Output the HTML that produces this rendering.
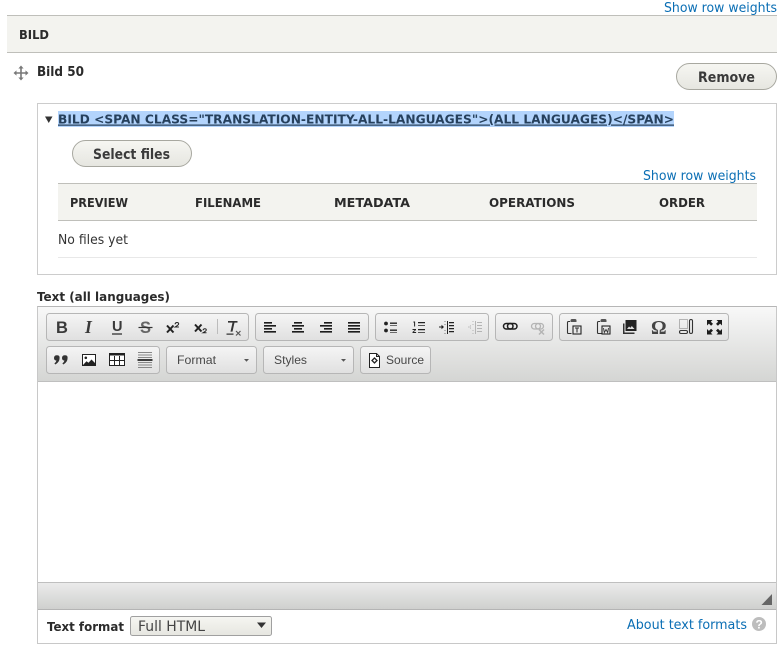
<!DOCTYPE html>
<html><head><meta charset="utf-8"><title>Bild</title>
<style>
html,body{margin:0;padding:0;background:#fff;width:784px;height:653px;overflow:hidden}
svg{display:block}
text{font-family:"DejaVu Sans","Liberation Sans",sans-serif;font-size:13px;fill:#333;white-space:pre}
.b{font-weight:bold;fill:#2b2b2b;font-size:12.5px}
.l{fill:#0a6eb4}
.a{font-family:"Liberation Sans",sans-serif;fill:#484848;font-size:12px}
</style></head><body>
<svg width="784" height="653" viewBox="0 0 784 653" xmlns="http://www.w3.org/2000/svg">
<defs>
<linearGradient id="btn" x1="0" y1="0" x2="0" y2="1"><stop offset="0" stop-color="#f6f6f2"/><stop offset="1" stop-color="#e6e6e0"/></linearGradient>
<linearGradient id="tb" x1="0" y1="0" x2="0" y2="1"><stop offset="0" stop-color="#f8f8f8"/><stop offset="1" stop-color="#d4d5d3"/></linearGradient>
<linearGradient id="bot" x1="0" y1="0" x2="0" y2="1"><stop offset="0" stop-color="#ebebeb"/><stop offset="1" stop-color="#cfd0ce"/></linearGradient>
<linearGradient id="grp" x1="0" y1="0" x2="0" y2="1"><stop offset="0" stop-color="#f5f5f5"/><stop offset="1" stop-color="#e0e0e0"/></linearGradient>
</defs>

<!-- top -->
<text class="l" x="664" y="12" textLength="113" lengthAdjust="spacingAndGlyphs">Show row weights</text>
<rect x="7" y="15.5" width="770" height="37" fill="#f3f3ef"/>
<path d="M7 15.5H777M7 52.5H777" stroke="#bfbfba" fill="none"/>
<text class="b" x="19" y="39" textLength="30" lengthAdjust="spacingAndGlyphs">BILD</text>

<!-- drag -->
<g fill="#787878">
<path d="M20.2 68h1.600v10h-1.600zM16 72.200h10v1.600H16z"/>
<path d="M21 65.500l2.600 3h-5.200zM21 80.500l2.600-3h-5.200zM13.500 73l3-2.600v5.200zM28.500 73l-3-2.600v5.200z"/>
</g>
<text class="b" x="37" y="76" style="font-size:13px" textLength="47" lengthAdjust="spacingAndGlyphs">Bild 50</text>

<!-- remove -->
<rect x="676.500" y="63.500" width="100" height="26" rx="13" fill="url(#btn)" stroke="#a8a8a0"/>
<text class="b" x="698" y="82" style="font-size:14px;fill:#3a3a3a" textLength="57" lengthAdjust="spacingAndGlyphs">Remove</text>

<!-- inner box -->
<rect x="37.500" y="103.500" width="739" height="171" fill="#fff" stroke="#ccc"/>
<path d="M45 116.500h7.500l-3.750 6.500z" fill="#333"/>
<rect x="58" y="111" width="616" height="16" fill="#b3d4fc"/>
<text class="b" x="58" y="123.500" style="fill:#26405c;text-decoration:underline" textLength="616" lengthAdjust="spacingAndGlyphs">BILD &lt;SPAN CLASS="TRANSLATION-ENTITY-ALL-LANGUAGES"&gt;(ALL LANGUAGES)&lt;/SPAN&gt;</text>

<rect x="72.500" y="140.500" width="119" height="26" rx="13" fill="url(#btn)" stroke="#a8a8a0"/>
<text class="b" x="93" y="159" style="font-size:14px;fill:#3a3a3a" textLength="77" lengthAdjust="spacingAndGlyphs">Select files</text>

<text class="l" x="643" y="180" textLength="113" lengthAdjust="spacingAndGlyphs">Show row weights</text>

<rect x="58" y="183.500" width="699" height="37" fill="#f3f3ef"/>
<path d="M58 183.500H757M58 220.500H757" stroke="#bfbfba" fill="none"/>
<text class="b" x="70" y="207" textLength="58" lengthAdjust="spacingAndGlyphs">PREVIEW</text>
<text class="b" x="195" y="207" textLength="66" lengthAdjust="spacingAndGlyphs">FILENAME</text>
<text class="b" x="334" y="207" textLength="76" lengthAdjust="spacingAndGlyphs">METADATA</text>
<text class="b" x="489" y="207" textLength="86" lengthAdjust="spacingAndGlyphs">OPERATIONS</text>
<text class="b" x="659" y="207" textLength="46" lengthAdjust="spacingAndGlyphs">ORDER</text>
<text x="58" y="244" textLength="70" lengthAdjust="spacingAndGlyphs">No files yet</text>
<path d="M58 257.500H757" stroke="#e8e8e8"/>

<text class="b" x="37" y="301" textLength="133" lengthAdjust="spacingAndGlyphs">Text (all languages)</text>

<!-- editor -->
<rect x="37.500" y="306.500" width="739" height="337" fill="#fff" stroke="#c8c8c8"/>
<rect x="38" y="307" width="738" height="75" fill="url(#tb)"/>
<path d="M38 381.500H776" stroke="#bfbfbf"/>
<rect x="38" y="583" width="738" height="26" fill="url(#bot)"/>
<path d="M38 582.500H776" stroke="#bfbfbf"/>
<path d="M38 609.500H776" stroke="#b4b4b4"/>
<path d="M37.500 306.500H776.500" stroke="#b6b6b6"/>
<path d="M772 594v11h-10.500z" fill="#666"/>

<!-- groups -->
<g fill="url(#grp)" stroke="#b6b6b6">
<rect x="46.500" y="313.500" width="202" height="27" rx="3"/>
<rect x="255.500" y="313.500" width="113" height="27" rx="3"/>
<rect x="375.500" y="313.500" width="113" height="27" rx="3"/>
<rect x="495.500" y="313.500" width="57" height="27" rx="3"/>
<rect x="559.500" y="313.500" width="169" height="27" rx="3"/>
<rect x="46.500" y="346.500" width="113" height="27" rx="3"/>
<rect x="166.500" y="346.500" width="90" height="27" rx="3"/>
<rect x="263.500" y="346.500" width="90" height="27" rx="3"/>
<rect x="360.500" y="346.500" width="70" height="27" rx="3"/>
</g>
<path d="M217.500 319v15" stroke="#bcbcbc"/>

<!-- basic styles -->
<text x="56" y="333" style="font-family:'Liberation Sans',sans-serif;font-weight:bold;font-size:16.500px;fill:#3a3a3a">B</text>
<text x="85" y="333" style="font-family:'Liberation Serif',serif;font-style:italic;font-weight:bold;font-size:17.500px;fill:#3a3a3a">I</text>
<text x="112" y="331" style="font-family:'Liberation Sans',sans-serif;font-weight:bold;font-size:14.500px;fill:#3a3a3a">U</text>
<path d="M112 334h10" stroke="#333" stroke-width="1.300"/>
<text x="140" y="333" style="font-family:'Liberation Sans',sans-serif;font-weight:bold;font-size:16.500px;fill:#666">S</text>
<path d="M138.500 327.500h14" stroke="#333" stroke-width="1.200"/>
<path d="M167 325.500l6.500 7M173.500 325.500l-6.500 7" stroke="#222" stroke-width="2" fill="none"/>
<path d="M175 324.200q.4-1.700 2-1.700t1.700 1.400q0 1-3.600 3.100h3.800" stroke="#222" stroke-width="1" fill="none"/>
<path d="M195 324.500l6.500 7M201.500 324.500l-6.500 7" stroke="#222" stroke-width="2" fill="none"/>
<path d="M203 330.200q.4-1.400 1.800-1.400t1.500 1.200q0 .9-3.300 2.800h3.500" stroke="#222" stroke-width="1" fill="none"/>
<path d="M228 321h9.500v1.600h-3l-2 9h-2l2-9H228zM226.500 333.500h7v1.300h-7z" fill="#333"/>
<path d="M236 331l4.500 4.500M240.500 331l-4.500 4.500" stroke="#555" stroke-width="1.200"/>

<!-- align -->
<g fill="#1c1c1c">
<path d="M264 322h8v1.600h-8zM264 325h12v1.600h-12zM264 328h8v1.600h-8zM264 331h12v1.600h-12z"/>
<path d="M294 322h8v1.600h-8zM292 325h12v1.600h-12zM294 328h8v1.600h-8zM292 331h12v1.600h-12z"/>
<path d="M324 322h8v1.600h-8zM320 325h12v1.600h-12zM324 328h8v1.600h-8zM320 331h12v1.600h-12z"/>
<path d="M348 322h12v1.600h-12zM348 325h12v1.600h-12zM348 328h12v1.600h-12zM348 331h12v1.600h-12z"/>
</g>

<!-- lists -->
<g fill="#222">
<circle cx="386" cy="323.500" r="1.900"/><circle cx="386" cy="330.500" r="1.900"/>
<path d="M390 322.500h7v1.400h-7zM390 329.500h7v1.400h-7zM390 325h7v.6h-7zM390 332h7v.6h-7z"/>
<path d="M413.500 321.500h1.600v5h-1v-4h-.8zM412.500 329h3.500v1l-2.300 2h2.400v1h-3.600v-1l2.300-2h-2.300z"/>
<path d="M418 322h7v1.300h-7zM418 325h7v.8h-7zM418 329h7v1.300h-7zM418 332h7v.8h-7z"/>
</g>
<g fill="#222">
<path d="M439 326.500h2.500v-1.800l2.500 2.300-2.500 2.300v-1.800H439z"/>
<path d="M444.500 321h1v1h-1zM444.500 324h1v1h-1zM444.500 330h1v1h-1zM444.500 333h1v1h-1z" fill="#777"/>
<path d="M447 321h1v13h-1z"/>
<path d="M449 322h5v1.300h-5zM449 325h5v1.300h-5zM449 328h5v1.300h-5zM449 331h5v1.300h-5z"/>
</g>
<g fill="#b4b4b4">
<path d="M471 329v-1.500h-3v-1h3V325l-2.500 2z"/>
<path d="M472.500 321h1v1h-1zM472.500 324h1v1h-1zM472.500 330h1v1h-1zM472.500 333h1v1h-1z"/>
<path d="M475 321h1v13h-1z"/>
<path d="M477 322h5v1h-5zM477 325h5v1h-5zM477 328h5v1h-5zM477 331h5v1h-5z"/>
</g>

<!-- link -->
<g fill="none" stroke="#1c1c1c" stroke-width="1.500">
<rect x="503.500" y="323.500" width="9.500" height="5.500" rx="2.750"/>
<rect x="507.500" y="323.500" width="9.500" height="5.500" rx="2.750"/>
</g>
<g fill="none" stroke="#b4b4b4" stroke-width="1.300">
<rect x="531.500" y="323.500" width="9" height="5.500" rx="2.750"/>
<rect x="535.500" y="323.500" width="8" height="5.500" rx="2.750"/>
<path d="M539 329.500l5 5M544 329.500l-5 5" stroke-width="1.500"/>
</g>

<!-- clipboard -->
<g fill="none" stroke="#333" stroke-width="1.100">
<path d="M570 321.500h-1.500q-1 0-1 1v10q0 1 1 1h3"/>
<rect x="573" y="326" width="8" height="8" stroke="#222"/>
<path d="M575 328h4M577 328v4.500"/>
<path d="M600 321.500h-1.500q-1 0-1 1v10q0 1 1 1h3"/>
<rect x="602" y="326" width="8" height="8" stroke="#222"/>
<path d="M603.500 328l.8 4.500 1.700-3 1.700 3 .8-4.500" stroke-width=".9"/>
</g>
<path d="M570.500 320.500q0-1.500 1.500-1.500h3q1.500 0 1.500 1.500v1.500h-6zM600.500 320.500q0-1.500 1.500-1.500h3q1.500 0 1.500 1.500v1.500h-6z" fill="#555"/>
<path d="M571 321.500h2v3h-2z" fill="none"/>

<!-- image browse -->
<path d="M623 323.500h1.500v9h10v1.500H623z" fill="#333"/>
<rect x="625.500" y="320" width="11" height="11" fill="#222"/>
<path d="M627 329l2-2.500 1.500 1.300 1.300-1.800 2.700 3z" fill="#ddd"/>

<!-- omega -->
<text x="651" y="334" style="font-family:'Liberation Serif',serif;font-size:19.500px;font-weight:bold;fill:#444">Ω</text>

<!-- blocks -->
<path d="M679.500 319.500h8v9h-8z" fill="none" stroke="#777" stroke-dasharray="1 1"/>
<rect x="679.500" y="330.500" width="8" height="3" rx="1.500" fill="none" stroke="#333" stroke-width="1.100"/>
<rect x="689.500" y="319.500" width="3" height="14" rx="1.500" fill="none" stroke="#333" stroke-width="1.100"/>

<!-- maximize -->
<g fill="#1c1c1c">
<path d="M707 320h5.500l-1.700 1.700 2.200 2.200-1.900 1.900-2.200-2.200L707 325.500z"/>
<path d="M722 320h-5.500l1.700 1.700-2.200 2.200 1.900 1.900 2.200-2.200 1.900 1.900z"/>
<path d="M707 334.500h5.500l-1.700-1.700 2.200-2.200-1.900-1.900-2.200 2.200L707 329z"/>
<path d="M722 334.500h-5.500l1.700-1.700-2.200-2.200 1.900-1.900 2.200 2.200 1.900-1.900z"/>
</g>

<!-- row 2 -->
<path d="M54 358q0-2.800 2.900-2.800t2.700 2.700q0 4.300-4.200 6.600l-1-1q1.700-1.100 2-3-2.400 0-2.400-2.500zM62 358q0-2.800 2.900-2.800t2.700 2.700q0 4.300-4.200 6.600l-1-1q1.700-1.100 2-3-2.400 0-2.400-2.500z" fill="#333"/>
<rect x="82.500" y="354.500" width="13" height="11" fill="#fff" stroke="#222"/>
<circle cx="85.800" cy="357.800" r="1.300" fill="#222"/>
<path d="M83 365l3.500-3.800 2 1.600 3-3.300 3.500 3.500v2z" fill="#222"/>
<rect x="109.500" y="353.500" width="15" height="12" fill="#fff" stroke="#222"/>
<path d="M109.500 353.500h15v2h-15z" fill="#222"/>
<path d="M114.500 356v9M119.500 356v9M110 360.500h14" stroke="#222" fill="none"/>
<path d="M138 352.500h14M138 355h14M138 357.500h14M138 362.500h14M138 365h14M138 367.500h14" stroke="#888"/>
<path d="M137.500 360h15" stroke="#111" stroke-width="1.600"/>

<text class="a" x="177" y="364" textLength="39" lengthAdjust="spacingAndGlyphs">Format</text>
<path d="M244 359h5l-2.500 2.800z" fill="#555"/>
<text class="a" x="274" y="364" textLength="33" lengthAdjust="spacingAndGlyphs">Styles</text>
<path d="M341 359h5l-2.500 2.800z" fill="#555"/>
<path d="M369.500 353.500h7l3 3v11h-10z" fill="#fff" stroke="#222"/>
<path d="M376.500 353.500v3h3" fill="none" stroke="#222"/>
<path d="M374.500 358l-2.500 2.500 2.500 2.500 2.500-2.500z" fill="none" stroke="#222" stroke-width="1.300"/>
<text class="a" x="386" y="364" textLength="38" lengthAdjust="spacingAndGlyphs">Source</text>

<!-- footer -->
<text class="b" x="47" y="631" textLength="77" lengthAdjust="spacingAndGlyphs">Text format</text>
<rect x="130.500" y="616.500" width="141" height="19" rx="2" fill="url(#btn)" stroke="#a0a0a0"/>
<text x="138" y="631" style="font-size:14px;fill:#444" textLength="67" lengthAdjust="spacingAndGlyphs">Full HTML</text>
<path d="M257 622.500h9l-4.500 5.500z" fill="#333"/>
<text class="l" x="627" y="629" textLength="120" lengthAdjust="spacingAndGlyphs">About text formats</text>
<circle cx="759" cy="624" r="7" fill="#bdbdbd"/>
<text x="755.500" y="628.500" style="font-family:'Liberation Sans',sans-serif;font-weight:bold;font-size:12px;fill:#fff">?</text>
</svg>
</body></html>
